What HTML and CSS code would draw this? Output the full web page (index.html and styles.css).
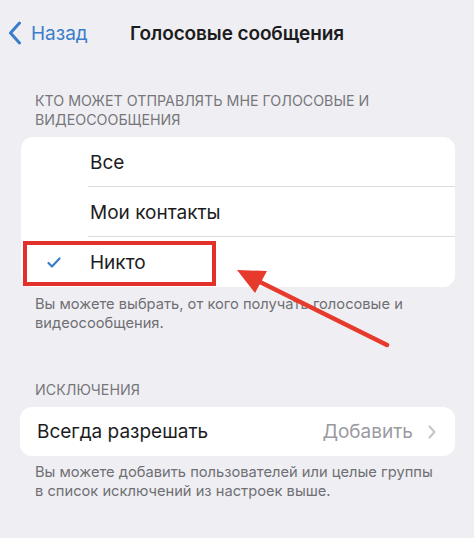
FILE: index.html
```html
<!DOCTYPE html>
<html lang="ru">
<head>
<meta charset="utf-8">
<link rel="stylesheet" href="styles.css">
</head>
<body>
<div class="page">
  <header class="nav">
    <div class="back">
      <svg class="chev" width="14" height="24" viewBox="0 0 14 24"><path d="M11.5 2 L2.5 12 L11.5 22" fill="none" stroke="#3a7dca" stroke-width="3" stroke-linecap="round" stroke-linejoin="round"/></svg>
      <span>Назад</span>
    </div>
    <div class="title">Голосовые сообщения</div>
  </header>

  <div class="sec-head first">КТО МОЖЕТ ОТПРАВЛЯТЬ МНЕ ГОЛОСОВЫЕ И ВИДЕОСООБЩЕНИЯ</div>
  <div class="card choices">
    <div class="row"><span class="check"></span><span class="label">Все</span></div>
    <div class="row"><span class="check"></span><span class="label">Мои контакты</span></div>
    <div class="row last"><span class="check"><svg width="14" height="11" viewBox="0 0 14 11"><path d="M1.5 6 L5 9.5 L12.5 1.5" fill="none" stroke="#3a7dca" stroke-width="2.2" stroke-linecap="round" stroke-linejoin="round"/></svg></span><span class="label">Никто</span></div>
  </div>
  <div class="sec-foot">Вы можете выбрать, от кого получать голосовые и видеосообщения.</div>

  <div class="sec-head second">ИСКЛЮЧЕНИЯ</div>
  <div class="card single">
    <span class="label">Всегда разрешать</span>
    <span class="value">Добавить<svg class="rchev" width="8" height="14" viewBox="0 0 8 14"><path d="M1.5 1.5 L6.5 7 L1.5 12.5" fill="none" stroke="#c4c4c8" stroke-width="2" stroke-linecap="round" stroke-linejoin="round"/></svg></span>
  </div>
  <div class="sec-foot last">Вы можете добавить пользователей или целые группы в список исключений из настроек выше.</div>

  <div class="hl-box"></div>
  <svg class="arrow" width="474" height="538" viewBox="0 0 474 538">
    <line x1="387" y1="345" x2="256" y2="280" stroke="#e63a2c" stroke-width="4.5" stroke-linecap="round"/>
    <polygon points="237,270 267,271 255,293" fill="#e63a2c"/>
  </svg>
</div>
</body>
</html>
```

FILE: styles.css
```css
* { box-sizing: border-box; }
html, body { margin: 0; padding: 0; }
body {
  background: #efeff3;
  font-family: Inter, "Open Sans", "Liberation Sans", sans-serif;
  color: #1c1c1e;
}
.page {
  position: relative;
  width: 474px;
  height: 538px;
  overflow: hidden;
}
.nav {
  position: relative;
  height: 66px;
  display: flex;
  align-items: center;
  justify-content: center;
}
.back {
  position: absolute;
  left: 8px;
  top: 0;
  height: 66px;
  display: flex;
  align-items: center;
  gap: 9px;
  color: #3a7dca;
  font-size: 19px;
}
.chev { display: block; }
.title {
  font-size: 19px;
  font-weight: 600;
  letter-spacing: -0.1px;
}
.sec-head {
  padding: 0 35px;
  font-size: 14.25px;
  line-height: 19px;
  color: #76767b;
}
.sec-head.first { margin-top: 25px; }
.sec-head.second { margin-top: 47px; }
.card {
  background: #fff;
  border-radius: 12px;
  margin: 8px 19px 0 21px;
}
.choices .row {
  height: 50px;
  display: flex;
  align-items: center;
  position: relative;
}
.choices .row::after {
  content: "";
  position: absolute;
  left: 67px;
  right: 0;
  bottom: 0;
  height: 1px;
  background: #dcdce0;
}
.choices .row.last::after { display: none; }
.check {
  width: 69px;
  display: flex;
  justify-content: flex-start;
  padding-left: 26px;
}
.check svg { display: block; }
.label { font-size: 19px; }
.sec-foot {
  padding: 0 35px;
  margin-top: 8px;
  font-size: 14.7px;
  line-height: 19px;
  color: #6f6f74;
}
.sec-foot.last { margin-top: 7px; }
.single {
  height: 49px;
  margin-left: 20px;
  margin-right: 19px;
  display: flex;
  align-items: center;
  justify-content: space-between;
  padding: 0 19px 0 17px;
}
.value {
  display: flex;
  align-items: center;
  gap: 15px;
  font-size: 19px;
  color: #9a9a9f;
}
.rchev { display: block; }
.hl-box {
  position: absolute;
  left: 23px;
  top: 241px;
  width: 193px;
  height: 45px;
  border: 4px solid #e2302a;
}
.arrow {
  position: absolute;
  left: 0;
  top: 0;
  pointer-events: none;
}
```
